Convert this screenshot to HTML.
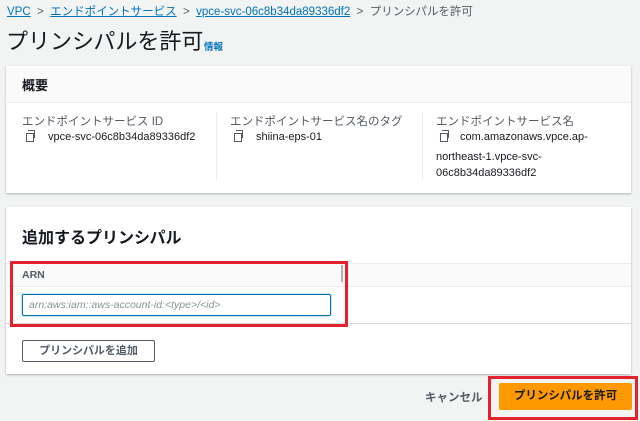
<!DOCTYPE html><html><head><meta charset="utf-8"><style>
*{box-sizing:border-box;margin:0;padding:0}
body{width:640px;height:421px;background:#f2f3f3;font-family:"Liberation Sans","Noto Sans CJK JP",sans-serif;color:#16191f;position:relative;overflow:hidden}
.a{position:absolute;white-space:nowrap}
.lk{color:#0073bb;text-decoration:underline}
.card{position:absolute;background:#fff;box-shadow:0 1px 2px rgba(0,22,40,.3)}
.lbl{color:#545b64;font-size:11.5px}
.val{font-size:11px;color:#16191f}
.cp{position:absolute;width:8px;height:9px;border:1.5px solid #545b64}
.cp:before{content:"";position:absolute;left:1px;top:-4px;width:6px;height:7px;border-top:1.5px solid #545b64;border-right:1.5px solid #545b64}
</style></head><body>
<div class="a" style="left:7px;top:3px;font-size:11.5px;color:#545b64"><span class="lk">VPC</span>&nbsp;&nbsp;&gt;&nbsp;&nbsp;<span class="lk">エンドポイントサービス</span>&nbsp;&nbsp;&gt;&nbsp;&nbsp;<span class="lk">vpce-svc-06c8b34da89336df2</span>&nbsp;&nbsp;&gt;&nbsp;&nbsp;プリンシパルを許可</div>
<div class="a" style="left:6px;top:24px;font-size:22px">プリンシパルを許可</div>
<div class="a" style="left:204px;top:39px;font-size:9.5px;color:#0073bb;font-weight:bold">情報</div>

<div class="card" style="left:6px;top:66px;width:625px;height:127px">
 <div style="height:37px;background:#fafafa;border-bottom:1px solid #eaeded"></div>
 <div class="a" style="left:16px;top:9px;font-size:13px;font-weight:bold">概要</div>
 <div class="a" style="left:210px;top:46px;width:1px;height:68px;background:#eaeded"></div>
 <div class="a" style="left:416px;top:46px;width:1px;height:68px;background:#eaeded"></div>
 <div class="a lbl" style="left:16px;top:47px">エンドポイントサービス ID</div>
 <div class="cp" style="left:20px;top:67px"></div>
 <div class="a val" style="left:42px;top:65px">vpce-svc-06c8b34da89336df2</div>
 <div class="a lbl" style="left:224px;top:47px">エンドポイントサービス名のタグ</div>
 <div class="cp" style="left:228px;top:67px"></div>
 <div class="a val" style="left:250px;top:65px">shiina-eps-01</div>
 <div class="a lbl" style="left:430px;top:47px">エンドポイントサービス名</div>
 <div class="cp" style="left:434px;top:67px"></div>
 <div class="a val" style="left:454px;top:65px">com.amazonaws.vpce.ap-</div>
 <div class="a val" style="left:430px;top:83px;line-height:16px">northeast-1.vpce-svc-<br>06c8b34da89336df2</div>
</div>

<div class="card" style="left:6px;top:207px;width:625px;height:167px">
 <div class="a" style="left:16px;top:17px;font-size:16px;font-weight:bold">追加するプリンシパル</div>
 <div class="a" style="left:0;top:56px;width:625px;height:24px;background:#fafafa;border-top:1px solid #eaeded;border-bottom:1px solid #eaeded"></div>
 <div class="a" style="left:16px;top:62px;font-size:10.5px;font-weight:bold;color:#545b64">ARN</div>
 <div class="a" style="left:335px;top:58px;width:2px;height:17px;background:#aab7b8"></div>
 <div class="a" style="left:0;top:116px;width:625px;height:1px;background:#d5dbdb"></div>
 <div class="a" style="left:16px;top:87px;width:309px;height:22px;border:1px solid #0073bb;border-radius:2px;box-shadow:0 0 0 1px #0073bb33"></div>
 <div class="a" style="left:23px;top:92px;font-size:10.5px;font-style:italic;color:#879596">arn:aws:iam::aws-account-id:&lt;type&gt;/&lt;id&gt;</div>
 <div class="a" style="left:16px;top:133px;width:133px;height:22px;border:1px solid #545b64;border-radius:2px;font-size:11px;font-weight:bold;color:#545b64;text-align:center;line-height:20px">プリンシパルを追加</div>
</div>
<div class="a" style="left:10px;top:261px;width:338px;height:66px;border:3px solid #e3222e"></div>

<div class="a" style="left:425px;top:389px;font-size:11.5px;font-weight:bold;color:#545b64">キャンセル</div>
<div class="a" style="left:499px;top:383px;width:133px;height:27px;background:#ff9900;border-radius:2px;font-size:11.5px;font-weight:bold;text-align:center;line-height:27px">プリンシパルを許可</div>
<div class="a" style="left:488px;top:376px;width:150px;height:44px;border:3px solid #e3222e"></div>
</body></html>
